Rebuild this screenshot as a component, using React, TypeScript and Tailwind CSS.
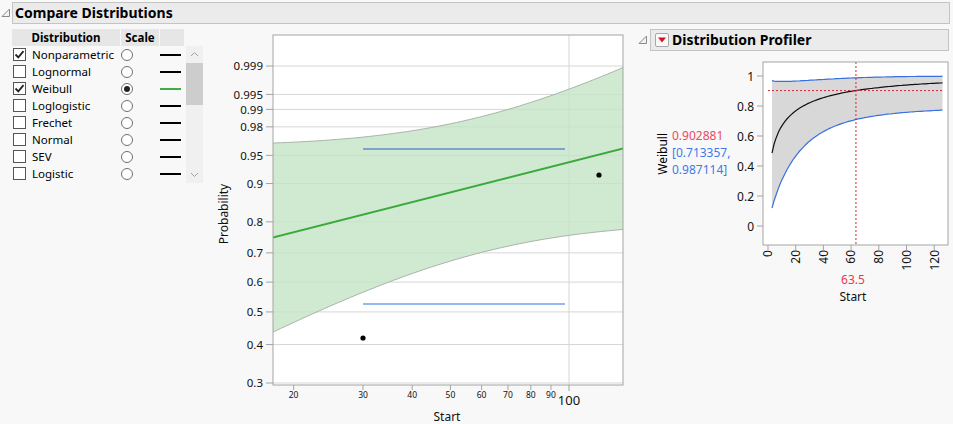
import React from "react";

// Weibull fit on the log/log scale: z = ln(-ln(1-p)), u = ln(t)
const zFit = (u: number) => 0.407 * (u - 2.067);
const halfWidth = (u: number) => Math.sqrt(0.403 + 0.252 * (u - 4.1) ** 2);
const zOf = (p: number) => Math.log(-Math.log(1 - p));
const pOf = (z: number) => 1 - Math.exp(-Math.exp(z));

// probability plot, local svg coords (svg sits at 205,27)
const PX = (t: number) => 158 + 171.1 * (Math.log(t) - Math.log(30));
const PY = (z: number) => 39 + (1.933 - z) * 106.95;

const range = (a: number, b: number, n: number) =>
  Array.from({ length: n + 1 }, (_, i) => a + ((b - a) * i) / n);

const us = range(Math.log(16), Math.log(145), 60);
const upperPts = us.map((u) => [PX(Math.exp(u)), PY(zFit(u) + halfWidth(u))]);
const lowerPts = us.map((u) => [PX(Math.exp(u)), PY(zFit(u) - halfWidth(u))]);
const toPath = (pts: number[][]) =>
  pts.map(([x, y], i) => `${i ? "L" : "M"}${x.toFixed(1)},${y.toFixed(1)}`).join("");
const bandPath =
  toPath(upperPts) +
  lowerPts
    .slice()
    .reverse()
    .map(([x, y]) => `L${x.toFixed(1)},${y.toFixed(1)}`)
    .join("") +
  "Z";
const fitPath = toPath([
  [PX(16), PY(zFit(Math.log(16)))],
  [PX(145), PY(zFit(Math.log(145)))],
]);

const probTicks: [number, string][] = [
  [0.999, "0.999"],
  [0.995, "0.995"],
  [0.99, "0.99"],
  [0.98, "0.98"],
  [0.95, "0.95"],
  [0.9, "0.9"],
  [0.8, "0.8"],
  [0.7, "0.7"],
  [0.6, "0.6"],
  [0.5, "0.5"],
  [0.4, "0.4"],
  [0.3, "0.3"],
];
const startTicks = [20, 30, 40, 50, 60, 70, 80, 90];

// profiler, local svg coords (svg sits at 725,55)
const RX = (t: number) => 43 + 1.385 * t;
const RY = (p: number) => 171 - 150 * p;
const ts = range(2.9, 126, 80);
const profCenter = ts.map((t) => [RX(t), RY(pOf(zFit(Math.log(t))))]);
const profUpper = ts.map((t) => {
  const u = Math.log(t);
  return [RX(t), RY(pOf(zFit(u) + halfWidth(u)))];
});
const profLower = ts.map((t) => {
  const u = Math.log(t);
  return [RX(t), RY(pOf(zFit(u) - halfWidth(u)))];
});
const profBand =
  toPath(profUpper) +
  profLower
    .slice()
    .reverse()
    .map(([x, y]) => `L${x.toFixed(1)},${y.toFixed(1)}`)
    .join("") +
  "Z";

const rows = [
  { name: "Nonparametric", checked: true, selected: false, color: "bg-black" },
  { name: "Lognormal", checked: false, selected: false, color: "bg-black" },
  { name: "Weibull", checked: true, selected: true, color: "bg-[#3fae3f]" },
  { name: "Loglogistic", checked: false, selected: false, color: "bg-black" },
  { name: "Frechet", checked: false, selected: false, color: "bg-black" },
  { name: "Normal", checked: false, selected: false, color: "bg-black" },
  { name: "SEV", checked: false, selected: false, color: "bg-black" },
  { name: "Logistic", checked: false, selected: false, color: "bg-black" },
];

function Disclosure() {
  return (
    <svg width="10" height="10" viewBox="0 0 10 10" className="shrink-0">
      <path d="M8.5,1 L8.5,8.5 L1,8.5 Z" fill="#f2f2f2" stroke="#8a8a8a" strokeWidth="1" />
    </svg>
  );
}

function Checkbox({ checked }: { checked: boolean }) {
  return (
    <span className="flex h-[13px] w-[13px] shrink-0 items-center justify-center border border-[#555] bg-white">
      {checked && (
        <svg width="11" height="11" viewBox="0 0 11 11">
          <path d="M1.5,5.5 L4.3,8.3 L9.5,2.2" fill="none" stroke="#222" strokeWidth="1.8" />
        </svg>
      )}
    </span>
  );
}

function Radio({ selected }: { selected: boolean }) {
  return (
    <span className="flex h-[12px] w-[12px] items-center justify-center rounded-full border border-[#6f6f6f] bg-white">
      {selected && <span className="h-[6px] w-[6px] rounded-full bg-[#222]" />}
    </span>
  );
}

function DistributionTable() {
  return (
    <div className="ml-[12px] mt-[5px] flex w-[190px] text-[11.5px] leading-[17px] text-black">
      <div className="flex flex-col">
        <div className="flex h-[17px] gap-px font-bold">
          <div className="flex w-[108px] items-center justify-center bg-[#e6e6e6]">Distribution</div>
          <div className="flex w-[38px] items-center justify-center bg-[#e6e6e6]">Scale</div>
          <div className="w-[24px] bg-[#e6e6e6]" />
        </div>
        {rows.map((r) => (
          <div key={r.name} className="flex h-[17px] items-center">
            <div className="flex w-[109px] shrink-0 items-center gap-[6px] pl-px">
              <Checkbox checked={r.checked} />
              <span className="whitespace-nowrap">{r.name}</span>
            </div>
            <div className="flex w-[39px] shrink-0 items-center">
              <Radio selected={r.selected} />
            </div>
            <div className={`h-[2px] w-[21px] ${r.color}`} />
          </div>
        ))}
      </div>
      <div className="ml-[2px] mt-[17px] flex h-[137px] w-[17px] flex-col items-center bg-[#f0f0f0]">
        <svg width="17" height="17" viewBox="0 0 17 17">
          <path d="M5,10 L8.5,6.5 L12,10" fill="none" stroke="#a0a0a0" strokeWidth="1" />
        </svg>
        <div className="h-[42px] w-full bg-[#cdcdcd]" />
        <div className="flex-1" />
        <svg width="17" height="17" viewBox="0 0 17 17">
          <path d="M5,7 L8.5,10.5 L12,7" fill="none" stroke="#a0a0a0" strokeWidth="1" />
        </svg>
      </div>
    </div>
  );
}

function ProbabilityPlot() {
  return (
    <svg
      width="427"
      height="397"
      viewBox="0 0 427 397"
      className="ml-[3px] mt-[3px] shrink-0"
      fontFamily="'Noto Sans', sans-serif"
    >
      <defs>
        <clipPath id="frameClip">
          <rect x="68" y="8" width="350" height="350" />
        </clipPath>
      </defs>
      <rect x="68" y="8" width="350" height="350" fill="#fff" />
      <g clipPath="url(#frameClip)">
        {probTicks.map(([p]) => (
          <line key={p} x1="68" x2="418" y1={PY(zOf(p))} y2={PY(zOf(p))} stroke="#d6d6d6" />
        ))}
        <line x1={PX(100)} x2={PX(100)} y1="8" y2="358" stroke="#d6d6d6" />
        <path d={bandPath} fill="#c4e4c6" fillOpacity="0.8" />
        <path d={toPath(upperPts)} fill="none" stroke="#a9b5a9" strokeWidth="1" />
        <path d={toPath(lowerPts)} fill="none" stroke="#a9b5a9" strokeWidth="1" />
        <line x1="158" x2="360" y1="122" y2="122" stroke="#2a62c2" strokeWidth="1.2" />
        <line x1="158" x2="360" y1="277" y2="277" stroke="#2f72e6" strokeWidth="1.2" />
        <path d={fitPath} fill="none" stroke="#3aa83a" strokeWidth="2" />
        <circle cx="158" cy="311" r="2.6" fill="#000" />
        <circle cx="394" cy="148" r="2.6" fill="#000" />
      </g>
      <rect x="68" y="8" width="350" height="350" fill="none" stroke="#a3a3a3" />
      {probTicks.map(([p, label]) => (
        <g key={label}>
          <line x1="61" x2="68" y1={PY(zOf(p))} y2={PY(zOf(p))} stroke="#a3a3a3" />
          <text x="58" y={PY(zOf(p)) + 4.2} fontSize="11.5" textAnchor="end" fill="#111">
            {label}
          </text>
        </g>
      ))}
      {startTicks.map((t) => (
        <g key={t}>
          <line x1={PX(t)} x2={PX(t)} y1="358" y2="363" stroke="#a3a3a3" />
          <text x={PX(t)} y="371" fontSize="8.5" textAnchor="middle" fill="#111">
            {t}
          </text>
        </g>
      ))}
      <line x1={PX(100)} x2={PX(100)} y1="358" y2="364" stroke="#a3a3a3" />
      <text x={PX(100)} y="378" fontSize="13" textAnchor="middle" fill="#111">
        100
      </text>
      <text x="242" y="394" fontSize="12" textAnchor="middle" fill="#111">
        Start
      </text>
      <text
        x="0"
        y="0"
        fontSize="12"
        textAnchor="middle"
        fill="#111"
        transform="translate(23,187) rotate(-90)"
      >
        Probability
      </text>
    </svg>
  );
}

function ProfilerPlot() {
  const yTicks: [number, string][] = [
    [1, "1"],
    [0.8, "0.8"],
    [0.6, "0.6"],
    [0.4, "0.4"],
    [0.2, "0.2"],
    [0, "0"],
  ];
  const xTicks = [0, 20, 40, 60, 80, 100, 120];
  const hx = RX(63.5);
  const hy = RY(0.902881);
  return (
    <svg
      width="228"
      height="250"
      viewBox="0 0 228 250"
      className="shrink-0"
      fontFamily="'Noto Sans', sans-serif"
    >
      <rect x="38" y="7" width="185" height="183" fill="#fff" />
      <path d={profBand} fill="#d8d8d8" />
      <path d={toPath(profUpper)} fill="none" stroke="#3a6fe2" strokeWidth="1.2" />
      <path d={toPath(profLower)} fill="none" stroke="#3a6fe2" strokeWidth="1.2" />
      <path d={toPath(profCenter)} fill="none" stroke="#111" strokeWidth="1.2" />
      <line x1="43" x2="218" y1={hy} y2={hy} stroke="#e0203a" strokeDasharray="2 2" />
      <line x1={hx} x2={hx} y1="7" y2="190" stroke="#e0203a" strokeDasharray="2 2" />
      <rect x="38" y="7" width="185" height="183" fill="none" stroke="#a3a3a3" />
      {yTicks.map(([p, label]) => (
        <g key={label}>
          <line x1="32" x2="38" y1={RY(p)} y2={RY(p)} stroke="#a3a3a3" />
          <text x="29" y={RY(p) + 4.5} fontSize="12" textAnchor="end" fill="#111">
            {label}
          </text>
        </g>
      ))}
      {xTicks.map((t) => (
        <g key={t}>
          <line x1={RX(t)} x2={RX(t)} y1="190" y2="195" stroke="#a3a3a3" />
          <text
            x="0"
            y="0"
            fontSize="12"
            textAnchor="end"
            fill="#111"
            transform={`translate(${RX(t) + 4.3},195) rotate(-90)`}
          >
            {t}
          </text>
        </g>
      ))}
      <text x={hx - 3} y="229" fontSize="12" textAnchor="middle" fill="#e8384f">
        63.5
      </text>
      <text x={hx - 3} y="246" fontSize="12" textAnchor="middle" fill="#111">
        Start
      </text>
    </svg>
  );
}

function Profiler() {
  return (
    <div className="ml-[4px] mt-[5px] flex w-[317px] flex-col">
      <div className="flex items-center gap-[2px] pl-[2px]">
        <Disclosure />
        <div className="flex h-[22px] w-[299px] items-center gap-[3px] border border-[#c4c4c4] bg-[#ebebeb] pl-[4px]">
          <span className="flex h-[14px] w-[14px] items-center justify-center rounded-[2px] border border-[#a8a8a8] bg-[#fafafa]">
            <svg width="8" height="6" viewBox="0 0 8 6">
              <path d="M0,0.5 L8,0.5 L4,5.5 Z" fill="#d8102a" />
            </svg>
          </span>
          <span className="text-[14px] font-bold leading-none text-black">Distribution Profiler</span>
        </div>
      </div>
      <div className="mt-[4px] flex items-start">
        <div className="ml-[19px] mt-[72px] flex w-[70px] shrink-0 items-start gap-[3px] text-[12px] leading-[17px]">
          <span className="mt-[6px] flex w-[14px] shrink-0 justify-center">
            <span className="rotate-180 text-black [writing-mode:vertical-rl]">Weibull</span>
          </span>
          <div className="flex flex-col whitespace-nowrap">
            <span className="text-[#ec4a5c]">0.902881</span>
            <span className="text-[#3c7be6]">[0.713357,</span>
            <span className="text-[#3c7be6]">0.987114]</span>
          </div>
        </div>
        <ProfilerPlot />
      </div>
    </div>
  );
}

export default function App() {
  return (
    <div className="relative h-[424px] w-[953px] overflow-hidden bg-[#f8f8f8] font-['Noto_Sans',sans-serif]">
      <div className="mt-[2px] flex items-center gap-px pl-[1px]">
        <Disclosure />
        <div className="flex h-[22px] w-[938px] items-center border border-[#c4c4c4] bg-[#ebebeb] pl-[2px]">
          <span className="text-[14px] font-bold leading-none text-black">Compare Distributions</span>
        </div>
      </div>
      <div className="flex items-start">
        <DistributionTable />
        <ProbabilityPlot />
        <Profiler />
      </div>
    </div>
  );
}
